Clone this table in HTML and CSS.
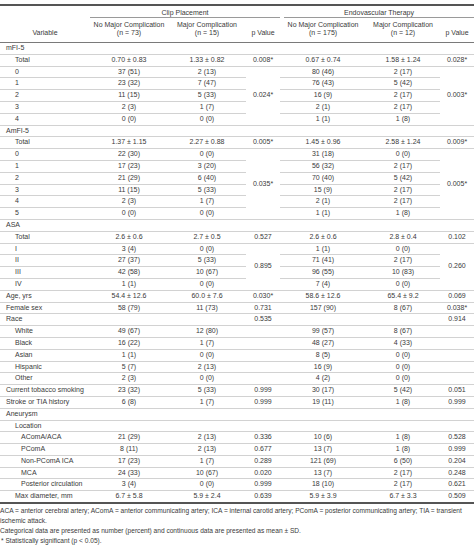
FILE: index.html
```
<!DOCTYPE html>
<html>
<head>
<meta charset="utf-8">
<link rel="stylesheet" href="styles.css">
</head>
<body>
<table class="tbl">
<colgroup>
<col class="c-var"><col class="c-a"><col class="c-b"><col class="c-p"><col class="c-d"><col class="c-e"><col class="c-q">
</colgroup>
<thead>
<tr class="h1">
<th class="var" rowspan="2">Variable</th>
<th class="grp" colspan="3"><div class="grp-l">Clip Placement</div></th>
<th class="grp" colspan="3"><div class="grp-l grp-r">Endovascular Therapy</div></th>
</tr>
<tr class="h2">
<th>No Major Complication<br>(n = 73)</th>
<th>Major Complication<br>(n = 15)</th>
<th class="pv">p Value</th>
<th>No Major Complication<br>(n = 175)</th>
<th>Major Complication<br>(n = 12)</th>
<th class="pv">p Value</th>
</tr>
</thead>
<tbody>
<tr><td class="v">mFI-5</td><td></td><td></td><td></td><td></td><td></td><td></td></tr>
<tr><td class="v i1">Total</td><td>0.70 ± 0.83</td><td>1.33 ± 0.82</td><td>0.008*</td><td>0.67 ± 0.74</td><td>1.58 ± 1.24</td><td>0.028*</td></tr>
<tr><td class="v i1">0</td><td>37 (51)</td><td>2 (13)</td><td rowspan="5">0.024*</td><td>80 (46)</td><td>2 (17)</td><td rowspan="5">0.003*</td></tr>
<tr><td class="v i1">1</td><td>23 (32)</td><td>7 (47)</td><td>76 (43)</td><td>5 (42)</td></tr>
<tr><td class="v i1">2</td><td>11 (15)</td><td>5 (33)</td><td>16 (9)</td><td>2 (17)</td></tr>
<tr><td class="v i1">3</td><td>2 (3)</td><td>1 (7)</td><td>2 (1)</td><td>2 (17)</td></tr>
<tr><td class="v i1">4</td><td>0 (0)</td><td>0 (0)</td><td>1 (1)</td><td>1 (8)</td></tr>
<tr><td class="v">AmFI-5</td><td></td><td></td><td></td><td></td><td></td><td></td></tr>
<tr><td class="v i1">Total</td><td>1.37 ± 1.15</td><td>2.27 ± 0.88</td><td>0.005*</td><td>1.45 ± 0.96</td><td>2.58 ± 1.24</td><td>0.009*</td></tr>
<tr><td class="v i1">0</td><td>22 (30)</td><td>0 (0)</td><td rowspan="6">0.035*</td><td>31 (18)</td><td>0 (0)</td><td rowspan="6">0.005*</td></tr>
<tr><td class="v i1">1</td><td>17 (23)</td><td>3 (20)</td><td>56 (32)</td><td>2 (17)</td></tr>
<tr><td class="v i1">2</td><td>21 (29)</td><td>6 (40)</td><td>70 (40)</td><td>5 (42)</td></tr>
<tr><td class="v i1">3</td><td>11 (15)</td><td>5 (33)</td><td>15 (9)</td><td>2 (17)</td></tr>
<tr><td class="v i1">4</td><td>2 (3)</td><td>1 (7)</td><td>2 (1)</td><td>2 (17)</td></tr>
<tr><td class="v i1">5</td><td>0 (0)</td><td>0 (0)</td><td>1 (1)</td><td>1 (8)</td></tr>
<tr><td class="v">ASA</td><td></td><td></td><td></td><td></td><td></td><td></td></tr>
<tr><td class="v i1">Total</td><td>2.6 ± 0.6</td><td>2.7 ± 0.5</td><td>0.527</td><td>2.6 ± 0.6</td><td>2.8 ± 0.4</td><td>0.102</td></tr>
<tr><td class="v i1">I</td><td>3 (4)</td><td>0 (0)</td><td rowspan="4">0.895</td><td>1 (1)</td><td>0 (0)</td><td rowspan="4">0.260</td></tr>
<tr><td class="v i1">II</td><td>27 (37)</td><td>5 (33)</td><td>71 (41)</td><td>2 (17)</td></tr>
<tr><td class="v i1">III</td><td>42 (58)</td><td>10 (67)</td><td>96 (55)</td><td>10 (83)</td></tr>
<tr><td class="v i1">IV</td><td>1 (1)</td><td>0 (0)</td><td>7 (4)</td><td>0 (0)</td></tr>
<tr><td class="v">Age, yrs</td><td>54.4 ± 12.6</td><td>60.0 ± 7.6</td><td>0.030*</td><td>58.6 ± 12.6</td><td>65.4 ± 9.2</td><td>0.069</td></tr>
<tr><td class="v">Female sex</td><td>58 (79)</td><td>11 (73)</td><td>0.731</td><td>157 (90)</td><td>8 (67)</td><td>0.038*</td></tr>
<tr><td class="v">Race</td><td></td><td></td><td>0.535</td><td></td><td></td><td>0.914</td></tr>
<tr><td class="v i1">White</td><td>49 (67)</td><td>12 (80)</td><td></td><td>99 (57)</td><td>8 (67)</td><td></td></tr>
<tr><td class="v i1">Black</td><td>16 (22)</td><td>1 (7)</td><td></td><td>48 (27)</td><td>4 (33)</td><td></td></tr>
<tr><td class="v i1">Asian</td><td>1 (1)</td><td>0 (0)</td><td></td><td>8 (5)</td><td>0 (0)</td><td></td></tr>
<tr><td class="v i1">Hispanic</td><td>5 (7)</td><td>2 (13)</td><td></td><td>16 (9)</td><td>0 (0)</td><td></td></tr>
<tr><td class="v i1">Other</td><td>2 (3)</td><td>0 (0)</td><td></td><td>4 (2)</td><td>0 (0)</td><td></td></tr>
<tr><td class="v">Current tobacco smoking</td><td>23 (32)</td><td>5 (33)</td><td>0.999</td><td>30 (17)</td><td>5 (42)</td><td>0.051</td></tr>
<tr><td class="v">Stroke or TIA history</td><td>6 (8)</td><td>1 (7)</td><td>0.999</td><td>19 (11)</td><td>1 (8)</td><td>0.999</td></tr>
<tr><td class="v">Aneurysm</td><td></td><td></td><td></td><td></td><td></td><td></td></tr>
<tr><td class="v i1">Location</td><td></td><td></td><td></td><td></td><td></td><td></td></tr>
<tr><td class="v i2">AComA/ACA</td><td>21 (29)</td><td>2 (13)</td><td>0.336</td><td>10 (6)</td><td>1 (8)</td><td>0.528</td></tr>
<tr><td class="v i2">PComA</td><td>8 (11)</td><td>2 (13)</td><td>0.677</td><td>13 (7)</td><td>1 (8)</td><td>0.999</td></tr>
<tr><td class="v i2">Non-PComA ICA</td><td>17 (23)</td><td>1 (7)</td><td>0.289</td><td>121 (69)</td><td>6 (50)</td><td>0.204</td></tr>
<tr><td class="v i2">MCA</td><td>24 (33)</td><td>10 (67)</td><td>0.020</td><td>13 (7)</td><td>2 (17)</td><td>0.248</td></tr>
<tr><td class="v i2">Posterior circulation</td><td>3 (4)</td><td>0 (0)</td><td>0.999</td><td>18 (10)</td><td>2 (17)</td><td>0.621</td></tr>
<tr class="last"><td class="v i1">Max diameter, mm</td><td>6.7 ± 5.8</td><td>5.9 ± 2.4</td><td>0.639</td><td>5.9 ± 3.9</td><td>6.7 ± 3.3</td><td>0.509</td></tr>
</tbody>
</table>
<div class="notes">
<p>ACA = anterior cerebral artery; AComA = anterior communicating artery; ICA = internal carotid artery; PComA = posterior communicating artery; TIA = transient<br>ischemic attack.</p>
<p>Categorical data are presented as number (percent) and continuous data are presented as mean ± SD.</p>
<p class="star">* Statistically significant (p &lt; 0.05).</p>
</div>
</body>
</html>
```

FILE: styles.css
```
html, body {
  margin: 0;
  padding: 0;
  background: #fff;
}
body {
  width: 474px;
  font-family: "Liberation Sans", Arial, sans-serif;
  font-size: 7px;
  color: #3a3a3a;
}
.tbl {
  width: 474px;
  table-layout: fixed;
  border-collapse: separate;
  border-spacing: 0;
  margin-top: 4px;
  border-top: 2px solid #555;
}
.c-var { width: 90px; }
.c-a { width: 78px; }
.c-b { width: 78px; }
.c-p { width: 34px; }
.c-d { width: 86px; }
.c-e { width: 74px; }
.c-q { width: 34px; }

th {
  font-weight: normal;
  padding: 0;
  line-height: 8px;
  text-align: center;
  white-space: nowrap;
}
.h1 .grp {
  padding-top: 3px;
  vertical-align: top;
}
.grp-l {
  border-bottom: 1px solid #9a9a9a;
}
.grp-r {
  margin-left: 4px;
}
th.var {
  vertical-align: bottom;
  padding-bottom: 5px;
  border-bottom: 1px solid #7a7a7a;
}
.h2 th {
  padding: 3px 0 5px;
  vertical-align: bottom;
  border-bottom: 1px solid #7a7a7a;
}

td {
  padding: 0;
  line-height: 10.8px;
  text-align: center;
  white-space: nowrap;
  border-bottom: 1px solid #d2d2d2;
  vertical-align: middle;
}
td.v {
  text-align: left;
  padding-left: 6px;
}
td.i1 { padding-left: 15px; }
td.i2 { padding-left: 21px; }
tr.last td {
  border-bottom: 2px solid #555;
}

.notes {
  margin-top: 2px;
  font-size: 6.6px;
  line-height: 10px;
}
.notes p {
  margin: 0;
}
.notes .star {
  padding-left: 1px;
}
```
